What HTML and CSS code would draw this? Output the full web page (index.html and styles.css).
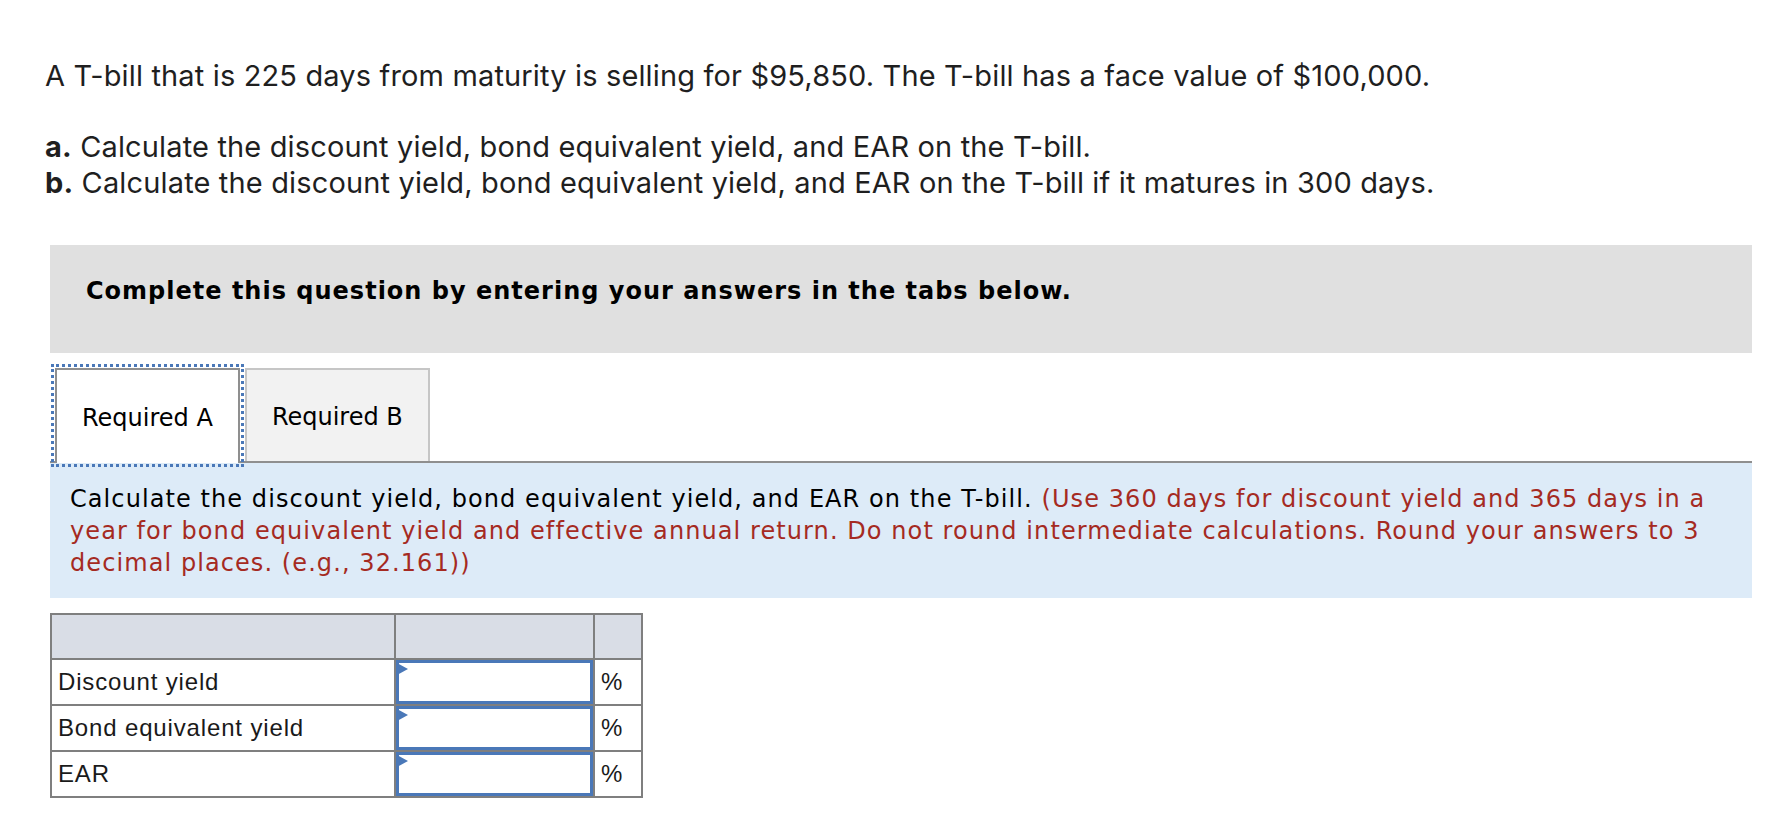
FILE: index.html
```html
<!DOCTYPE html>
<html>
<head>
    <title>T-bill Yield Question</title>
    <link rel="stylesheet" href="styles.css">
</head>
<body>
    <div class="question">
        <p class="lead">A T-bill that is 225 days from maturity is selling for $95,850. The T-bill has a face value of $100,000.</p>
        <p class="parts">
            <strong>a.</strong> Calculate the discount yield, bond equivalent yield, and EAR on the T-bill.<br>
            <strong>b.</strong> Calculate the discount yield, bond equivalent yield, and EAR on the T-bill if it matures in 300 days.
        </p>
    </div>

    <div class="worksheet">
        <div class="notice">Complete this question by entering your answers in the tabs below.</div>

        <div class="tabs">
            <div class="tab active">Required A</div>
            <div class="tab">Required B</div>
        </div>

        <div class="instructions">
            Calculate the discount yield, bond equivalent yield, and EAR on the T-bill.
            <span class="hint">(Use 360 days for discount yield and 365 days in a year for bond equivalent yield and effective annual return. Do not round intermediate calculations. Round your answers to 3 decimal places. (e.g., 32.161))</span>
        </div>

        <table class="answers">
            <tr class="head">
                <th class="label-col"></th>
                <th class="input-col"></th>
                <th class="unit-col"></th>
            </tr>
            <tr>
                <td>Discount yield</td>
                <td class="cell-input"><input type="text" class="answer"><span class="flag"></span></td>
                <td class="unit">%</td>
            </tr>
            <tr>
                <td>Bond equivalent yield</td>
                <td class="cell-input"><input type="text" class="answer"><span class="flag"></span></td>
                <td class="unit">%</td>
            </tr>
            <tr>
                <td>EAR</td>
                <td class="cell-input"><input type="text" class="answer"><span class="flag"></span></td>
                <td class="unit">%</td>
            </tr>
        </table>
    </div>
</body>
</html>
```

FILE: styles.css
```css
body {
    margin: 0;
    background: white;
    color: #1f1f1f;
}

.question {
    font-family: Inter, "Open Sans", sans-serif;
    font-size: 29px;
    letter-spacing: 0.15px;
    line-height: 36px;
    padding: 58px 45px 0 45px;
}

.question p {
    margin: 0;
}

.lead {
    margin-bottom: 35px !important;
}

.parts strong {
    font-weight: 700;
}

.worksheet {
    margin: 44px 26px 0 50px;
    font-family: "DejaVu Sans", Verdana, sans-serif;
    font-size: 24px;
}

.notice {
    background-color: #e0e0e0;
    height: 108px;
    box-sizing: border-box;
    padding: 31px 36px 0 36px;
    line-height: 30px;
    font-weight: bold;
    letter-spacing: 1px;
    color: #000;
}

.tabs {
    display: flex;
    align-items: flex-end;
    margin-top: 15px;
    border-bottom: 2px solid #8f8f8f;
    padding-left: 5px;
}

.tab {
    height: 93px;
    box-sizing: border-box;
    padding: 3px 25px 0 25px;
    display: flex;
    align-items: center;
    color: #000;
    background: #f2f2f2;
    border: 2px solid #c6c6c6;
    border-bottom: none;
}

.tab.active {
    background: white;
    border-color: #8f8f8f;
    margin-right: 5px;
    margin-bottom: -2px;
    height: 95px;
    outline: 3px dotted #4a78b8;
    outline-offset: 1px;
}

.instructions {
    background-color: #ddebf8;
    padding: 20px 20px 19px 20px;
    line-height: 32px;
    letter-spacing: 1.08px;
    color: #000;
}

.hint {
    color: #a52a22;
}

.answers {
    margin-top: 15px;
    border-collapse: collapse;
    font-family: "Liberation Sans", Arial, sans-serif;
    font-size: 24px;
    letter-spacing: 0.85px;
    color: #1a1a1a;
}

.answers th,
.answers td {
    border: 2px solid #7f7f7f;
    height: 42px;
    padding: 0 6px;
    text-align: left;
}

.answers .head th {
    background-color: #d9dde6;
    height: 43px;
}

.label-col {
    width: 330px;
}

.input-col {
    width: 185px;
}

.unit-col {
    width: 34px;
}

.answers td.cell-input {
    padding: 0;
    position: relative;
}

.answer {
    display: block;
    width: 100%;
    height: 44px;
    box-sizing: border-box;
    border: 2px solid #4a78b8;
    outline: 1px solid #4a78b8;
    outline-offset: -3px;
    margin: 0;
    padding: 0 6px;
    font-size: 22px;
}

.flag {
    position: absolute;
    top: 3px;
    left: 1px;
    width: 0;
    height: 0;
    border-top: 6px solid transparent;
    border-bottom: 6px solid transparent;
    border-left: 11px solid #4a78b8;
}

.unit {
    padding-left: 8px;
}
```
